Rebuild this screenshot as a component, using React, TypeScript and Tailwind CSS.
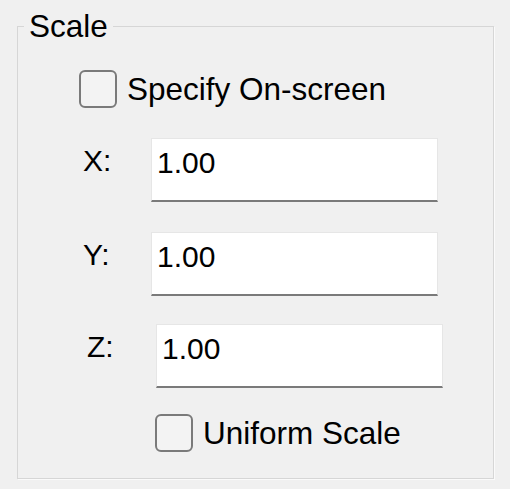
const font = { fontFamily: '"Liberation Sans", Arial, sans-serif' };

function Checkbox({ label }: { label: string }) {
  return (
    <label className="flex items-center">
      <span className="w-[38px] h-[38px] rounded-[6px] border-2 border-[#7a7a7a] bg-[#f3f3f3] shrink-0" />
      <span className="ml-[10px] text-[31.5px] leading-[36px] text-black">{label}</span>
    </label>
  );
}

function Field({ label, value, labelW }: { label: string; value: string; labelW: string }) {
  return (
    <div className="flex items-start">
      <span className={`${labelW} text-[30px] leading-[34px] text-black pt-[6px]`}>{label}</span>
      <div className="w-[287px] h-[64px] bg-white border border-[#e6e6e6] border-b-2 border-b-[#7a7a7a] px-[5px] pt-[7px] text-[30px] leading-[34px] text-black">
        {value}
      </div>
    </div>
  );
}

export default function App() {
  return (
    <div className="w-[510px] h-[489px] bg-[#f0f0f0] overflow-hidden" style={font}>
      <fieldset className="ml-[17px] mt-[8px] w-[477px] h-[471px] border border-[#d6d6d6] shadow-[1px_1px_0_#fafafa]">
        <legend className="ml-[6px] px-[5px] text-[31.5px] leading-[36px] text-black">Scale</legend>
        <div className="flex flex-col">
          <div className="ml-[61px] mt-[26px]">
            <Checkbox label="Specify On-screen" />
          </div>
          <div className="ml-[65px] mt-[30px]">
            <Field label="X:" value="1.00" labelW="w-[68px]" />
          </div>
          <div className="ml-[65px] mt-[30px]">
            <Field label="Y:" value="1.00" labelW="w-[68px]" />
          </div>
          <div className="ml-[69px] mt-[28px]">
            <Field label="Z:" value="1.00" labelW="w-[69px]" />
          </div>
          <div className="ml-[137px] mt-[26px]">
            <Checkbox label="Uniform Scale" />
          </div>
        </div>
      </fieldset>
    </div>
  );
}
